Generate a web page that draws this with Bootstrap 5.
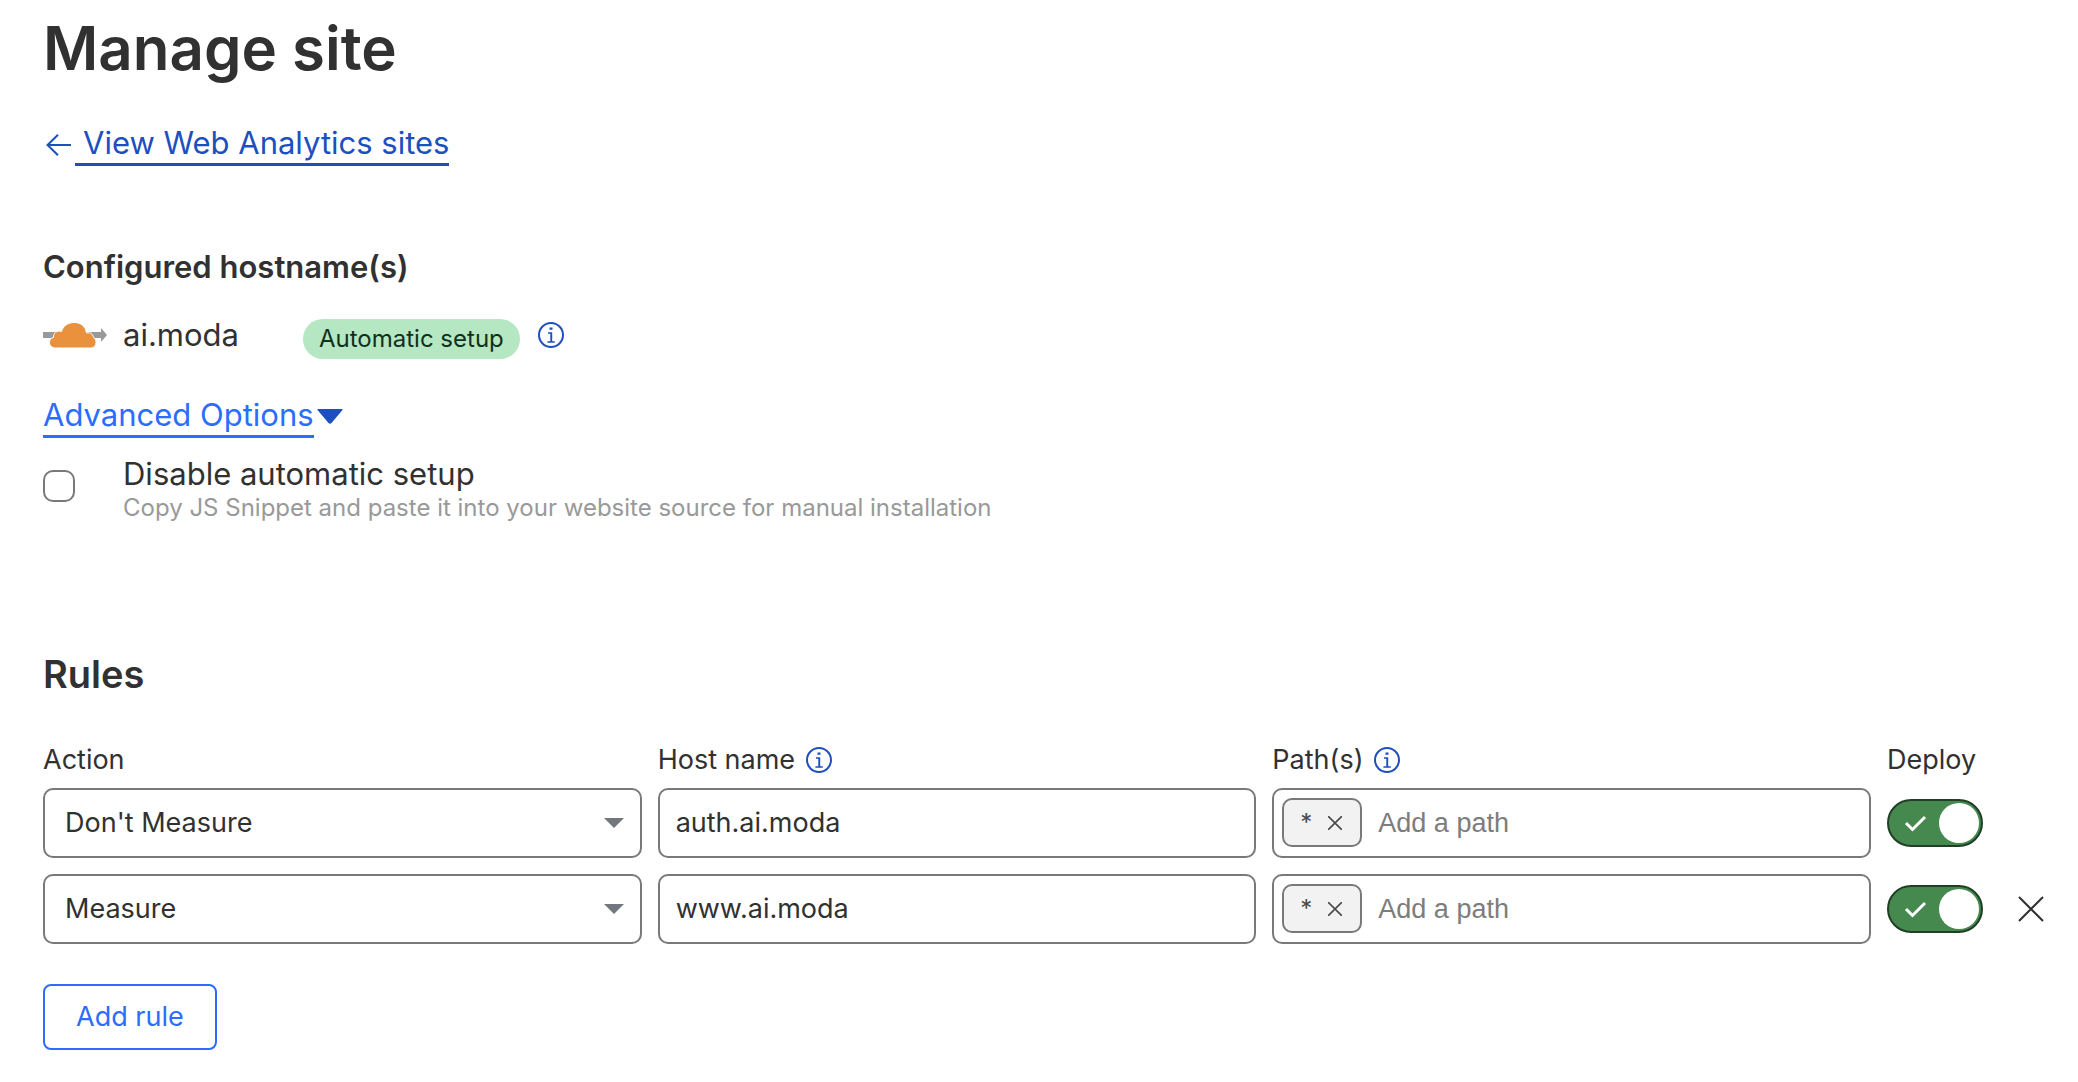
<!DOCTYPE html>
<html lang="en">
<head>
<meta charset="utf-8">
<meta name="viewport" content="width=device-width, initial-scale=1">
<title>Manage site</title>
<link href="https://cdn.jsdelivr.net/npm/bootstrap@5.3.0/dist/css/bootstrap.min.css" rel="stylesheet">
<style>
  body { font-family: Inter, "Liberation Sans", sans-serif; font-size: 27px; line-height: 40px; color: #313131; background: #fff; }
  .page { padding: 8px 15px 32px 43px; }
  .page-title { font-size: 60px; line-height: 80px; font-weight: 600; }
  .text-l { font-size: 31px; line-height: 40px; }
  .host-title { font-size: 31px; line-height: 40px; font-weight: 600; margin-top: 80px; }
  .rules-title { font-size: 38px; line-height: 48px; font-weight: 600; margin-top: 128px; }
  .text-s { font-size: 24px; line-height: 28px; }
  .back-link { color: #1d4fbf; margin-top: 35px; }
  .back-link svg { margin-left: 3px; }
  .back-link span { border-bottom: 3px solid #1d4fbf; padding-left: 8px; }
  .adv-btn { border: 0; background: none; padding: 0; color: #2c6cff; margin-top: 36px; gap: 3px; }
  .adv-btn span { border-bottom: 3px solid #2c6cff; line-height: 40px; }
  .host-row { margin-top: 24px; }
  .setup-pill { background: #b4e7c2; color: #10301c; font-weight: 400; font-size: 24px; line-height: 40px; padding: 0 16px; margin: 8px 18px 0 64px; }
  .info-btn { border: 0; background: none; padding: 0; color: #1d4fbf; line-height: 0; }
  .opt-row { gap: 48px; margin-top: 16px; }
  .opt-row .opt-box { width: 32px; height: 32px; margin: 16px 0 0; border: 2px solid #797979; border-radius: 10px; }
  .opt-note { color: #999; }
  .rule-grid { display: grid; grid-template-columns: repeat(3, minmax(0, 1fr)) 96px 64px; gap: 16px; align-items: center; }
  .rule-head { margin-top: 42px; margin-bottom: 8px; }
  .head-cell { gap: 11px; }
  .field { height: 70px; border: 2px solid #797979; border-radius: 10px; font-size: 27px; line-height: 40px; color: #313131; padding: 0 16px; background-color: #fff; }
  select.field { padding: 0 64px 0 20px; background-size: 20px 10px; background-position: right 16px center;
    background-image: url("data:image/svg+xml,%3Csvg xmlns='http://www.w3.org/2000/svg' viewBox='0 0 20 10'%3E%3Cpath fill='%2372767d' d='M0 0h20L10 10z'/%3E%3C/svg%3E"); }
  .tag-field { padding: 0 8px; gap: 16px; }
  .path-tag { width: 80px; height: 49px; border: 2px solid #797979; border-radius: 10px; background: #f2f2f2; font-size: 24px; color: #4a4a4a; gap: 16px; padding-right: 2px; }
  .path-tag button, .remove-btn { border: 0; background: none; padding: 0; line-height: 0; color: inherit; }
  .path-input { border: 0; outline: 0; padding: 0; background: none; min-width: 0; font-family: "Liberation Sans", Arial, sans-serif; font-size: 27px; }
  .path-input::placeholder { color: #7d7d7d; opacity: 1; }
  .form-switch.deploy { padding: 0; min-height: 0; line-height: 0; margin: 0; }
  .form-switch .deploy-input { width: 96px; height: 48px; margin: 0; float: none; border: 2px solid #1f3f26; }
  .form-switch .deploy-input:checked { background-color: #46894f; border-color: #1f3f26; background-position: center; background-size: 92px 44px;
    background-image: url("data:image/svg+xml,%3Csvg xmlns='http://www.w3.org/2000/svg' viewBox='0 0 92 44'%3E%3Ccircle cx='70' cy='22' r='20' fill='%23fff'/%3E%3Cpath fill='none' stroke='%23fff' stroke-width='3' d='M17 22l6.500 6.500L36 16'/%3E%3C/svg%3E"); }
  .rule-list { gap: 16px; }
  .add-btn { --bs-btn-color: #2c6cff; --bs-btn-border-color: #2c6cff; --bs-btn-border-width: 2px; --bs-btn-border-radius: 8px; --bs-btn-font-size: 27px; --bs-btn-padding-x: 31px; --bs-btn-padding-y: 11px; line-height: 40px; margin-top: 40px; }
</style>
<script src="https://cdn.jsdelivr.net/npm/bootstrap@5.3.0/dist/js/bootstrap.bundle.min.js"></script>
</head>
<body>
<svg width="0" height="0" class="d-none" aria-hidden="true">
  <symbol id="info" viewBox="0 0 26 26"><circle cx="13" cy="13" r="12" fill="none" stroke="currentColor" stroke-width="2"/><path d="M11.500 5.500h3v2.300h-3zM10 10.200h4.200v9h2.600v1.600H9.400v-1.600h2.900v-7.400H10z" fill="currentColor"/></symbol>
  <symbol id="tag-x" viewBox="0 0 14 14"><path d="M0 0l14 14M14 0L0 14" fill="none" stroke="currentColor" stroke-width="1.600"/></symbol>
</svg>
<main class="page container-fluid">
  <h1 class="page-title mb-0">Manage site</h1>
  <a href="#" class="back-link text-l d-inline-flex align-items-center text-decoration-none">
    <svg width="25" height="22" viewBox="0 0 25 22" class="me-1" fill="none" stroke="currentColor" stroke-width="2" aria-hidden="true"><path d="M25 11H1.500M12 .7L1.500 11 12 21.300"/></svg><span>View Web Analytics sites</span>
  </a>

  <section>
    <h2 class="host-title mb-0">Configured hostname(s)</h2>
    <div class="host-row d-flex align-items-center">
      <svg width="64" height="26" viewBox="0 0 64 26" aria-hidden="true"><path fill="#999" d="M0 10h58V6l6 7-6 7v-4H0z"/><path fill="#e9913c" stroke="#fff" stroke-width="1" d="M12.500 26C9 26 6.500 23.500 6.500 20.500c0-3 1.500-4.500 4-5-.5-4.500 3.500-7.500 8-6C20 4 25 .5 31 .5c7 0 11.500 4 12.500 10.500 4-1 6.500 1 7 4.500 1.500.5 2.500 2.500 2.500 5 0 3-2 5.500-5 5.500z"/></svg>
      <span class="text-l ms-3">ai.moda</span>
      <span class="badge rounded-pill setup-pill">Automatic setup</span>
      <button type="button" class="info-btn" aria-label="About automatic setup"><svg width="26" height="26"><use href="#info"/></svg></button>
    </div>
    <button type="button" class="adv-btn text-l d-flex align-items-center" aria-expanded="true"><span>Advanced Options</span>
      <svg width="26" height="15" viewBox="0 0 26 15" aria-hidden="true"><path fill="#1d4fbf" d="M1 0h24q1 0 .5 1L14.500 14q-1.500 1.500-3 0L.5 1Q0 0 1 0z"/></svg></button>
    <div class="opt-row d-flex align-items-start">
      <input type="checkbox" class="form-check-input opt-box flex-shrink-0" id="disable-auto" aria-describedby="disable-note">
      <div>
        <label for="disable-auto" class="text-l d-block">Disable automatic setup</label>
        <div class="text-s opt-note" id="disable-note">Copy JS Snippet and paste it into your website source for manual installation</div>
      </div>
    </div>
  </section>

  <section>
    <h2 class="rules-title mb-0">Rules</h2>
    <div class="rule-grid rule-head">
      <label for="action-1">Action</label>
      <div class="head-cell d-flex align-items-center"><label for="host-1">Host name</label><button type="button" class="info-btn" aria-label="About host name"><svg width="26" height="26"><use href="#info"/></svg></button></div>
      <div class="head-cell d-flex align-items-center"><label for="path-1">Path(s)</label><button type="button" class="info-btn" aria-label="About paths"><svg width="26" height="26"><use href="#info"/></svg></button></div>
      <label for="deploy-1">Deploy</label>
    </div>
    <div class="rule-list d-flex flex-column">
      <div class="rule-grid">
        <select class="form-select field" id="action-1"><option selected>Don't Measure</option><option>Measure</option></select>
        <input type="text" class="form-control field" id="host-1" value="auth.ai.moda">
        <div class="field tag-field d-flex align-items-center">
          <span class="path-tag d-flex align-items-center justify-content-center flex-shrink-0"><span>*</span><button type="button" aria-label="Remove path"><svg width="14" height="14"><use href="#tag-x"/></svg></button></span>
          <input type="text" class="path-input flex-grow-1" id="path-1" placeholder="Add a path">
        </div>
        <div class="form-check form-switch deploy"><input class="form-check-input deploy-input" type="checkbox" role="switch" id="deploy-1" checked></div>
      </div>
      <div class="rule-grid">
        <select class="form-select field" aria-label="Action"><option>Don't Measure</option><option selected>Measure</option></select>
        <input type="text" class="form-control field" aria-label="Host name" value="www.ai.moda">
        <div class="field tag-field d-flex align-items-center">
          <span class="path-tag d-flex align-items-center justify-content-center flex-shrink-0"><span>*</span><button type="button" aria-label="Remove path"><svg width="14" height="14"><use href="#tag-x"/></svg></button></span>
          <input type="text" class="path-input flex-grow-1" aria-label="Paths" placeholder="Add a path">
        </div>
        <div class="form-check form-switch deploy"><input class="form-check-input deploy-input" type="checkbox" role="switch" aria-label="Deploy" checked></div>
        <button type="button" class="remove-btn" aria-label="Remove rule"><svg width="26" height="26" viewBox="0 0 26 26"><path d="M1 1l24 24M25 1L1 25" fill="none" stroke="currentColor" stroke-width="2"/></svg></button>
      </div>
    </div>
    <button type="button" class="btn btn-outline-primary add-btn">Add rule</button>
  </section>
</main>
</body>
</html>
